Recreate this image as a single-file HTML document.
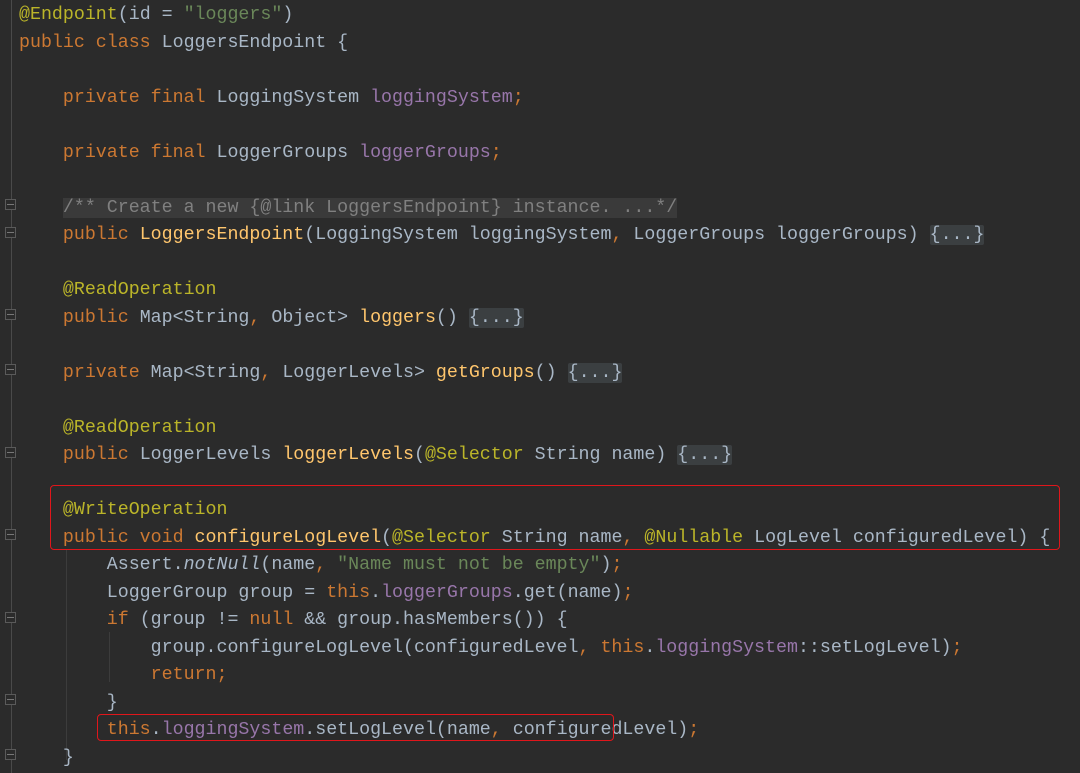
<!DOCTYPE html>
<html><head><meta charset="utf-8"><style>
body{margin:0;background:#2b2b2b;width:1080px;height:773px;overflow:hidden;position:relative;font-family:"Liberation Mono",monospace;}
.code{position:absolute;left:19px;top:2px;font-size:18.3px;line-height:27.5px;color:#a9b7c6;white-space:pre;}
.k{color:#cc7832}.a{color:#bbb529}.s{color:#6a8759}.f{color:#9876aa}.m{color:#ffc66d}.c{color:#808080;background:#3a3a3a}.i{font-style:italic}
.fo{background:#3b3f41;color:#a9b7c6;border-radius:2px}
.gl{position:absolute;left:11px;top:0;width:1px;height:773px;background:#4a4a4a}
.box{position:absolute;border:1.5px solid #e0161b;border-radius:4px}
.fm{position:absolute;left:5px;width:9px;height:9px;border:1px solid #5a5a5a;background:#2b2b2b}
.fm:after{content:"";position:absolute;left:1px;top:4px;width:7px;height:1px;background:#777}
.ig{position:absolute;width:1px;background:#3c3c3c}
</style></head><body>
<div class="gl"></div>
<div class="fm" style="top:199px"></div>
<div class="fm" style="top:227px"></div>
<div class="fm" style="top:309px"></div>
<div class="fm" style="top:364px"></div>
<div class="fm" style="top:447px"></div>
<div class="fm" style="top:529px"></div>
<div class="fm" style="top:612px"></div>
<div class="fm" style="top:694px"></div>
<div class="fm" style="top:749px"></div>
<div class="ig" style="left:66px;top:550px;height:210px"></div>
<div class="ig" style="left:109px;top:632px;height:50px"></div>
<div class="code"><span class="a">@Endpoint</span>(id = <span class="s">"loggers"</span>)
<span class="k">public class </span>LoggersEndpoint {

    <span class="k">private final </span>LoggingSystem <span class="f">loggingSystem</span><span class="k">;</span>

    <span class="k">private final </span>LoggerGroups <span class="f">loggerGroups</span><span class="k">;</span>

    <span class="c">/** Create a new {@link LoggersEndpoint} instance. ...*/</span>
    <span class="k">public </span><span class="m">LoggersEndpoint</span>(LoggingSystem loggingSystem<span class="k">, </span>LoggerGroups loggerGroups) <span class="fo">{...}</span>

    <span class="a">@ReadOperation</span>
    <span class="k">public </span>Map&lt;String<span class="k">, </span>Object&gt; <span class="m">loggers</span>() <span class="fo">{...}</span>

    <span class="k">private </span>Map&lt;String<span class="k">, </span>LoggerLevels&gt; <span class="m">getGroups</span>() <span class="fo">{...}</span>

    <span class="a">@ReadOperation</span>
    <span class="k">public </span>LoggerLevels <span class="m">loggerLevels</span>(<span class="a">@Selector </span>String name) <span class="fo">{...}</span>

    <span class="a">@WriteOperation</span>
    <span class="k">public void </span><span class="m">configureLogLevel</span>(<span class="a">@Selector </span>String name<span class="k">, </span><span class="a">@Nullable </span>LogLevel configuredLevel) {
        Assert.<span class="i">notNull</span>(name<span class="k">, </span><span class="s">"Name must not be empty"</span>)<span class="k">;</span>
        LoggerGroup group = <span class="k">this</span>.<span class="f">loggerGroups</span>.get(name)<span class="k">;</span>
        <span class="k">if </span>(group != <span class="k">null </span>&amp;&amp; group.hasMembers()) {
            group.configureLogLevel(configuredLevel<span class="k">, this</span>.<span class="f">loggingSystem</span>::setLogLevel)<span class="k">;</span>
            <span class="k">return;</span>
        }
        <span class="k">this</span>.<span class="f">loggingSystem</span>.setLogLevel(name<span class="k">, </span>configuredLevel)<span class="k">;</span>
    }</div>
<div class="box" style="left:50px;top:485px;width:1008px;height:63px"></div>
<div class="box" style="left:97px;top:714px;width:515px;height:25px"></div>
</body></html>
